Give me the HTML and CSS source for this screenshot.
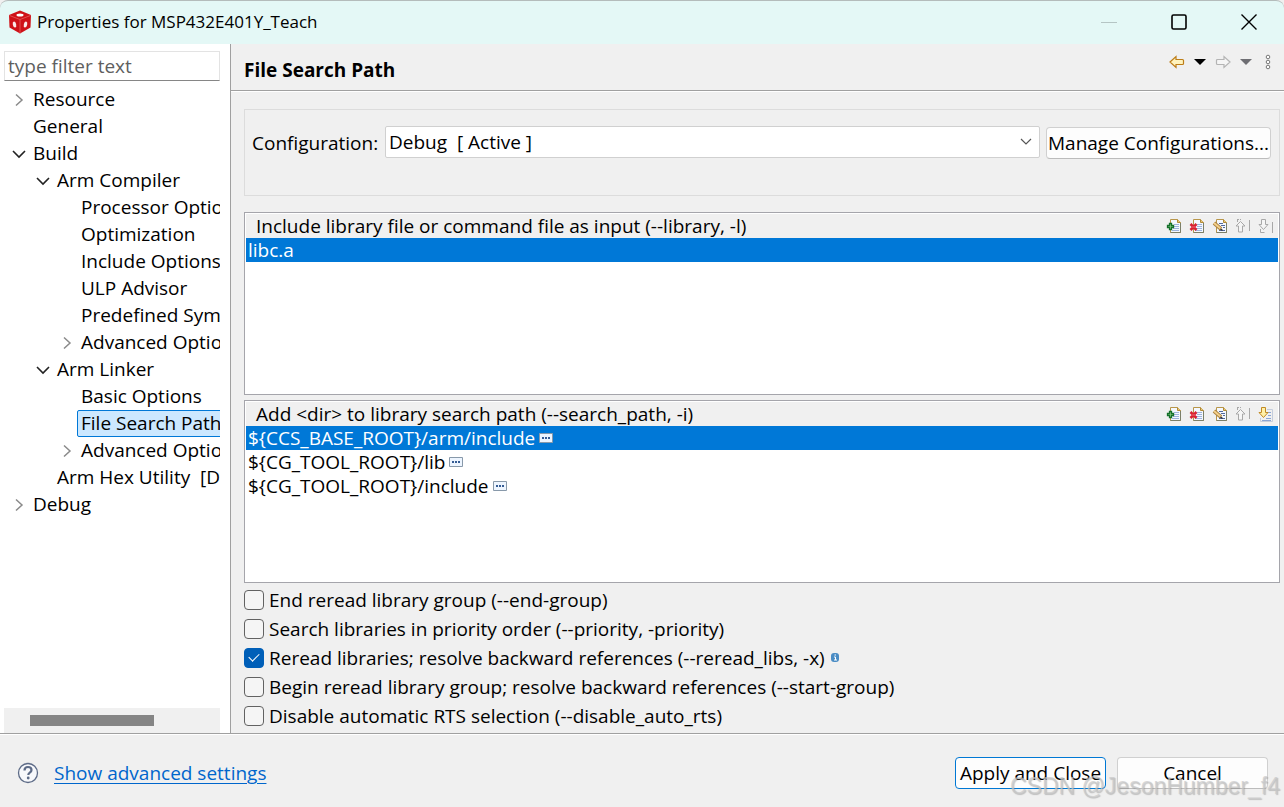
FILE: index.html
```html
<!DOCTYPE html>
<html lang="en">

<head>
    <meta charset="UTF-8">
    <meta name="viewport" content="width=device-width, initial-scale=1.0">
    <title>Properties for MSP432E401Y_Teach</title>
    <link rel="stylesheet" href="styles.css">
</head>

<body>
    <!-- Shared icons -->
    <svg class="sprite" aria-hidden="true">
        <symbol id="right" viewBox="0 0 16 16"><path d="M6 2.500l6 5.500-6 5.500" fill="none" stroke="#8a8a8a" stroke-width="1.500"/></symbol>
        <symbol id="down" viewBox="0 0 16 16"><path d="M3 5l6 6 6-6" fill="none" stroke="#222" stroke-width="1.600"/></symbol>
        <symbol id="page" viewBox="0 0 16 16">
            <path d="M4.500 1.500h7l3 3v10h-10z" fill="#f4f8ff" stroke="#b8964a"/>
            <path d="M14.500 5v9.500h-10" fill="none" stroke="#7b7f68"/>
            <path d="M11.500 1.500v3h3" fill="#e8c878" stroke="#b08a38"/>
            <path d="M8 6.500h5M8 8.500h5M7 10.500h6M6 12.500h7" stroke="#9db4dc"/>
        </symbol>
        <symbol id="add" viewBox="0 0 16 16">
            <use href="#page"/>
            <path d="M3.500 5.500h2v2h2v2h-2v2h-2v-2h-2v-2h2z" fill="#8fd08a" stroke="#14702a" stroke-width="1.300"/>
        </symbol>
        <symbol id="delete" viewBox="0 0 16 16">
            <use href="#page"/>
            <path d="M1.500 6l6 6M7.500 6l-6 6" stroke="#d92032" stroke-width="2.600"/>
            <path d="M3 9h3" stroke="#f06a70"/>
        </symbol>
        <symbol id="edit" viewBox="0 0 16 16">
            <path d="M4.500 1.500h7l3 3v10h-10z" fill="#f4f8ff" stroke="#b8964a"/>
            <path d="M14.500 5v9.500h-10" fill="none" stroke="#7b7f68"/>
            <path d="M11.500 1.500v3h3" fill="#e8c878" stroke="#b08a38"/>
            <path d="M7 5.500h4M9 7.500h4M11 9.500h2M7 12.500h6" stroke="#50689c"/>
            <path d="M2 5l7 6" stroke="#a88040" stroke-width="3.800"/>
            <path d="M2 5l6.500 5.500" stroke="#f4d08a" stroke-width="2"/>
            <path d="M8.500 11l2 1.500" stroke="#333" stroke-width="1.500"/>
        </symbol>
        <symbol id="up-off" viewBox="0 0 16 16">
            <path d="M2.500 1v3M2.500 1.500h1.500M5 1.500h1M5.500 3.500l4.500 4.500h-2.500v6h-4v-6h-2.500z" fill="#f5f5f5" stroke="#a8a8a8"/>
            <path d="M14.500 2v11" stroke="#a8a8a8"/>
        </symbol>
        <symbol id="down-off" viewBox="0 0 16 16">
            <path d="M3.500 1.500h4v5h2.500l-4.500 5-4.500-5h2.500zM2.500 11v3.500h4" fill="#f5f5f5" stroke="#a8a8a8"/>
            <path d="M14.500 4v11" stroke="#a8a8a8"/>
        </symbol>
        <symbol id="down-on" viewBox="0 0 16 16">
            <path d="M9 3.500h5.500v12M2.500 12v3.500h12" fill="none" stroke="#c4cddc"/>
            <path d="M10 6.500h3M10 9.500h3M8 12.500h5M4 14.500h9" stroke="#8aa5d4"/>
            <path d="M3.500 1.500h4v5h2.500l-4.500 5-4.500-5h2.500z" fill="#fff0a8" stroke="#c18a24"/>
        </symbol>
        <symbol id="dots" viewBox="0 0 14 10">
            <path d="M.500.500h13v9h-13z" fill="#edf5ff" stroke="#8899aa"/>
            <path d="M3 5h2M6 5h2M9 5h2" stroke="#345b94" stroke-width="2"/>
        </symbol>
    </svg>

    <header class="titlebar">
        <svg class="logo" viewBox="0 0 24 24">
            <path d="M12 .5l11 4.500-.5 12.500L12 23.500 1.500 17.500 1 5z" fill="#cf1118"/>
            <path d="M1.500 5.500L12 9.500l10.500-4M12 9.500v14" fill="none" stroke="#e86a6a" stroke-width=".7"/>
            <ellipse cx="12" cy="5" rx="3.500" ry="1.500" fill="#fff"/>
            <ellipse cx="6.500" cy="14.500" rx="1.700" ry="3" fill="#fbe9e9" transform="rotate(-12 6.500 14.500)"/>
            <ellipse cx="17.500" cy="14.500" rx="1.700" ry="3" fill="#fbe9e9" transform="rotate(12 17.500 14.500)"/>
        </svg>
        <span class="title">Properties for MSP432E401Y_Teach</span>
        <button class="win-btn" aria-label="Minimize"><svg viewBox="0 0 16 16"><path d="M0 8.500h16" stroke="#b5c5c4"/></svg></button>
        <button class="win-btn" aria-label="Maximize"><svg viewBox="0 0 16 16"><rect x="1" y="1" width="14" height="14" rx="1.500" fill="none" stroke="#000" stroke-width="1.600"/></svg></button>
        <button class="win-btn" aria-label="Close"><svg viewBox="0 0 16 16"><path d="M.500.500l15 15M15.500.500l-15 15" stroke="#000" stroke-width="1.400"/></svg></button>
    </header>

    <div class="main">
        <aside class="sidebar">
            <input class="filter" type="text" placeholder="type filter text" aria-label="type filter text">
            <ul class="tree">
                <li><div class="node"><svg><use href="#right"/></svg><span>Resource</span></div></li>
                <li><div class="node"><svg></svg><span>General</span></div></li>
                <li>
                    <div class="node"><svg><use href="#down"/></svg><span>Build</span></div>
                    <ul>
                        <li>
                            <div class="node"><svg><use href="#down"/></svg><span>Arm Compiler</span></div>
                            <ul>
                                <li><div class="node"><svg></svg><span>Processor Options</span></div></li>
                                <li><div class="node"><svg></svg><span>Optimization</span></div></li>
                                <li><div class="node"><svg></svg><span>Include Options</span></div></li>
                                <li><div class="node"><svg></svg><span>ULP Advisor</span></div></li>
                                <li><div class="node"><svg></svg><span>Predefined Symbols</span></div></li>
                                <li><div class="node"><svg><use href="#right"/></svg><span>Advanced Options</span></div></li>
                            </ul>
                        </li>
                        <li>
                            <div class="node"><svg><use href="#down"/></svg><span>Arm Linker</span></div>
                            <ul>
                                <li><div class="node"><svg></svg><span>Basic Options</span></div></li>
                                <li><div class="node"><svg></svg><span class="selected">File Search Path</span></div></li>
                                <li><div class="node"><svg><use href="#right"/></svg><span>Advanced Options</span></div></li>
                            </ul>
                        </li>
                        <li><div class="node"><svg></svg><span>Arm Hex Utility&nbsp; [Disabled]</span></div></li>
                    </ul>
                </li>
                <li><div class="node"><svg><use href="#right"/></svg><span>Debug</span></div></li>
            </ul>
            <div class="scrollbar"><div class="thumb"></div></div>
        </aside>

        <main class="content">
            <div class="page-head">
                <h1>File Search Path</h1>
                <div class="nav">
                    <button aria-label="Back"><svg width="16" height="14" viewBox="0 0 16 14"><path d="M1 7l6-5.500v3h6.500q1 0 1 1v3q0 1-1 1H7v3z" fill="#fff3bd" stroke="#bd7d18" stroke-width="1.200"/></svg></button>
                    <button aria-label="Back history"><svg width="12" height="6" viewBox="0 0 12 6"><path d="M0 0h12L6 6z" fill="#000"/></svg></button>
                    <button aria-label="Forward"><svg width="16" height="14" viewBox="0 0 16 14"><path d="M15 7L9 1.500v3H2.500q-1 0-1 1v3q0 1 1 1H9v3z" fill="#f5f5f5" stroke="#b4b4b4" stroke-width="1.200"/></svg></button>
                    <button aria-label="Forward history"><svg width="12" height="6" viewBox="0 0 12 6"><path d="M0 0h12L6 6z" fill="#6e6e73"/></svg></button>
                    <button class="menu" aria-label="Menu"><svg width="6" height="16" viewBox="0 0 6 16"><g fill="#fff" stroke="#777"><circle cx="3" cy="3" r="1.800"/><circle cx="3" cy="8" r="1.800"/><circle cx="3" cy="13" r="1.800"/></g></svg></button>
                </div>
            </div>

            <div class="settings">
                <div class="config">
                    <label for="config">Configuration:</label>
                    <div class="select-wrap">
                        <select id="config"><option>Debug&nbsp; [ Active ]</option></select>
                        <svg viewBox="0 0 16 16"><path d="M3 5l5 5 5-5" fill="none" stroke="#555" stroke-width="1.200"/></svg>
                    </div>
                    <button class="btn">Manage Configurations...</button>
                </div>

                <section class="list">
                    <div class="list-head">
                        <h2>Include library file or command file as input (--library, -l)</h2>
                        <button aria-label="Add"><svg><use href="#add"/></svg></button>
                        <button aria-label="Delete"><svg><use href="#delete"/></svg></button>
                        <button aria-label="Edit"><svg><use href="#edit"/></svg></button>
                        <button aria-label="Move up" disabled><svg><use href="#up-off"/></svg></button>
                        <button aria-label="Move down" disabled><svg><use href="#down-off"/></svg></button>
                    </div>
                    <ul>
                        <li class="active">libc.a</li>
                    </ul>
                </section>

                <section class="list">
                    <div class="list-head">
                        <h2>Add &lt;dir&gt; to library search path (--search_path, -i)</h2>
                        <button aria-label="Add"><svg><use href="#add"/></svg></button>
                        <button aria-label="Delete"><svg><use href="#delete"/></svg></button>
                        <button aria-label="Edit"><svg><use href="#edit"/></svg></button>
                        <button aria-label="Move up" disabled><svg><use href="#up-off"/></svg></button>
                        <button aria-label="Move down"><svg><use href="#down-on"/></svg></button>
                    </div>
                    <ul>
                        <li class="active">${CCS_BASE_ROOT}/arm/include<svg><use href="#dots"/></svg></li>
                        <li>${CG_TOOL_ROOT}/lib<svg><use href="#dots"/></svg></li>
                        <li>${CG_TOOL_ROOT}/include<svg><use href="#dots"/></svg></li>
                    </ul>
                </section>

                <div class="checks">
                    <label><input type="checkbox">End reread library group (--end-group)</label>
                    <label><input type="checkbox">Search libraries in priority order (--priority, -priority)</label>
                    <label><input type="checkbox" checked>Reread libraries; resolve backward references (--reread_libs, -x)
                        <svg class="info" viewBox="0 0 8 9"><rect width="8" height="9" rx="3" fill="#4a8cc4"/><path d="M3 4h1.500v3M3 7h3M3.500 2h1.500" fill="none" stroke="#fff"/></svg></label>
                    <label><input type="checkbox">Begin reread library group; resolve backward references (--start-group)</label>
                    <label><input type="checkbox">Disable automatic RTS selection (--disable_auto_rts)</label>
                </div>
            </div>
        </main>
    </div>

    <footer class="footer">
        <button class="help" aria-label="Help"><svg viewBox="0 0 22 22"><circle cx="11" cy="11" r="9.500" fill="#f7f8fb" stroke="#5d6b87" stroke-width="1.300"/><path d="M7.500 8.500q0-3.500 3.500-3.500t3.500 3q0 1.500-1.700 2.600-1.500 1-1.500 2.400" fill="none" stroke="#5d6b87" stroke-width="2.200"/><circle cx="11.200" cy="16" r="1.400" fill="#5d6b87"/></svg></button>
        <a href="#">Show advanced settings</a>
        <button class="btn primary">Apply and Close</button>
        <button class="btn">Cancel</button>
    </footer>
    <div class="watermark">CSDN @JesonHumber_f4</div>
</body>

</html>
```
FILE: styles.css
```css
* {
    box-sizing: border-box;
}

body {
    margin: 0;
    height: 100vh;
    display: flex;
    flex-direction: column;
    position: relative;
    overflow: hidden;
    background: #f0f0f0;
    color: #000;
    font-family: "Open Sans", "Noto Sans", sans-serif;
    font-size: 19px;
    line-height: 24px;
    white-space: nowrap;
}

button, input, select {
    font: inherit;
    color: inherit;
}

button {
    border: none;
    background: none;
    padding: 0;
}

ul {
    list-style: none;
    margin: 0;
    padding: 0;
}

svg {
    display: block;
    flex: none;
}

.sprite {
    position: absolute;
    width: 0;
    height: 0;
}

/* Title bar */
.titlebar {
    height: 44px;
    flex: none;
    display: flex;
    align-items: center;
    padding: 0 0 2px 8px;
    background: #e4f8f6;
    border-top: 1px solid #b4bcbb;
    border-radius: 8px 8px 0 0;
}

.logo {
    width: 24px;
    height: 24px;
    margin-right: 5px;
}

.title {
    flex: 1;
    font-size: 17px;
}

.win-btn {
    width: 70px;
    height: 41px;
    display: flex;
    align-items: center;
    justify-content: center;
}

.win-btn svg {
    width: 16px;
    height: 16px;
}

.main {
    flex: 1;
    min-height: 0;
    display: flex;
}

/* Left tree */
.sidebar {
    width: 231px;
    flex: none;
    display: flex;
    flex-direction: column;
    padding: 7px 10px 0 4px;
    background: #fff;
    border-right: 1px solid #a0a0a0;
}

.filter {
    width: 100%;
    height: 30px;
    margin-bottom: 5px;
    padding: 0 3px;
    border: 1px solid #e3e3e3;
    border-bottom-color: #868686;
}

.filter::placeholder {
    color: #5f5f5f;
    opacity: 1;
}

.tree {
    flex: 1;
    min-height: 0;
    overflow: hidden;
    padding-left: 6px;
}

.tree ul {
    padding-left: 24px;
}

.node {
    display: flex;
    align-items: center;
    height: 27px;
}

.node svg {
    width: 16px;
    height: 16px;
}

.node span {
    padding: 0 3px;
    margin-left: 4px;
    line-height: 25px;
}

.node .selected {
    background: #cce8ff;
    border: 1px solid #0078d7;
    border-radius: 2px;
    margin-left: 3px;
}

.scrollbar {
    height: 25px;
    flex: none;
    padding: 7px 26px;
    background: #f0f0f0;
}

.thumb {
    width: 124px;
    height: 11px;
    background: #858585;
}

/* Right page */
.content {
    flex: 1;
    min-width: 0;
    display: flex;
    flex-direction: column;
}

.page-head {
    display: flex;
    align-items: flex-start;
    justify-content: space-between;
    height: 47px;
    flex: none;
    padding: 10px 13px 0 13px;
    border-bottom: 1px solid #a0a0a0;
    box-shadow: 0 1px 0 #fff;
}

h1 {
    margin: 4px 0 0;
    font-size: 19px;
    font-weight: 700;
    line-height: 24px;
}

.nav {
    display: flex;
    align-items: center;
    gap: 9px;
    height: 16px;
}

.nav .menu {
    margin-left: 4px;
}

.settings {
    flex: 1;
    min-height: 0;
    display: flex;
    flex-direction: column;
    padding: 18px 4px 3px 13px;
}

.config {
    display: flex;
    align-items: flex-start;
    height: 87px;
    flex: none;
    padding: 16px 8px 0 7px;
    margin-bottom: 16px;
    border: 1px solid #dcdcdc;
}

.config label {
    width: 133px;
    line-height: 34px;
}

.select-wrap {
    flex: 1;
    position: relative;
    margin-right: 6px;
}

.select-wrap select {
    width: 100%;
    height: 32px;
    padding: 0 3px;
    appearance: none;
    background: #fff;
    border: 1px solid #d0d0d0;
    border-radius: 2px;
}

.select-wrap svg {
    position: absolute;
    right: 6px;
    top: 8px;
    width: 16px;
    height: 16px;
    pointer-events: none;
}

.btn {
    height: 32px;
    min-width: 151px;
    background: #fdfdfd;
    border: 1px solid #d0d0d0;
    border-bottom-color: #bcbcbc;
    border-radius: 4px;
}

.config .btn {
    width: 225px;
    margin-top: 1px;
}

.list {
    flex: 1;
    min-height: 0;
    margin-bottom: 5px;
    padding: 1px;
    background: #fff;
    border: 1px solid #a5a5ab;
}

.list + .list {
    margin-bottom: 2px;
}

.list-head {
    display: flex;
    align-items: center;
    gap: 7px;
    height: 24px;
    padding: 0 4px 0 10px;
    background: #f0f0f0;
}

.list-head h2 {
    flex: 1;
    margin: 0;
    font-size: 19px;
    font-weight: 400;
    line-height: 24px;
}

.list-head svg {
    width: 16px;
    height: 16px;
}

.list li {
    display: flex;
    align-items: center;
    gap: 4px;
    height: 24px;
    padding-left: 2px;
}

.list li svg {
    width: 14px;
    height: 10px;
}

.list .active {
    background: #0078d7;
    color: #fff;
}

.checks label {
    display: flex;
    align-items: center;
    height: 29px;
}

.checks input {
    appearance: none;
    width: 20px;
    height: 20px;
    margin: 0 5px 0 0;
    background: #f5f5f5;
    border: 1px solid #626262;
    border-radius: 4px;
}

.checks input:checked {
    background: #005fb8;
    border-color: #005fb8;
    display: grid;
    place-items: center;
}

.checks input:checked::after {
    content: "";
    width: 9px;
    height: 5px;
    margin-bottom: 3px;
    border-left: 1px solid #fff;
    border-bottom: 1px solid #fff;
    transform: rotate(-45deg);
}

.info {
    width: 8px;
    height: 9px;
    margin-left: 6px;
}

/* Bottom bar */
.footer {
    height: 74px;
    flex: none;
    display: flex;
    align-items: center;
    padding: 5px 16px 0 17px;
    border-top: 1px solid #a0a0a0;
    box-shadow: inset 0 1px 0 #fff;
}

.help svg {
    width: 22px;
    height: 22px;
}

.footer a {
    margin: 0 auto 0 15px;
    color: #0066cc;
    text-decoration-thickness: 1px;
    text-underline-offset: 3px;
}

.footer .btn {
    margin-left: 11px;
}

.footer .primary {
    border-color: #0078d4;
}

.watermark {
    position: absolute;
    right: 4px;
    bottom: 9px;
    font-family: "Liberation Sans", sans-serif;
    font-size: 23px;
    color: rgba(200, 200, 200, 0.7);
    text-shadow: 1px 1px 1px rgba(120, 120, 120, 0.4);
    pointer-events: none;
}
```
